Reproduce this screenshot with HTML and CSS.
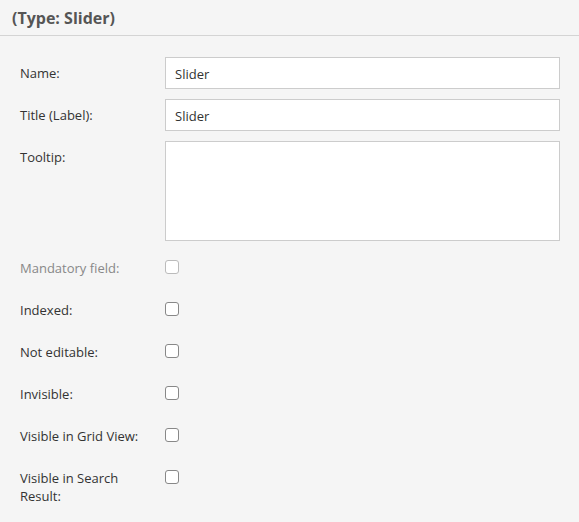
FILE: index.html
```html
<!DOCTYPE html>
<html>
<head>
<meta charset="utf-8">
<link rel="stylesheet" href="styles.css">
</head>
<body>
<div class="panel">
  <div class="header">(Type: Slider)</div>
  <form class="form">
    <div class="row">
      <label class="label">Name:</label>
      <div class="field"><input class="input" type="text" value="Slider"></div>
    </div>
    <div class="row">
      <label class="label">Title (Label):</label>
      <div class="field"><input class="input" type="text" value="Slider"></div>
    </div>
    <div class="row">
      <label class="label">Tooltip:</label>
      <div class="field"><textarea class="textarea"></textarea></div>
    </div>
    <div class="row row-check disabled">
      <label class="label">Mandatory field:</label>
      <div class="field"><span class="check"></span></div>
    </div>
    <div class="row row-check">
      <label class="label">Indexed:</label>
      <div class="field"><span class="check"></span></div>
    </div>
    <div class="row row-check">
      <label class="label">Not editable:</label>
      <div class="field"><span class="check"></span></div>
    </div>
    <div class="row row-check">
      <label class="label">Invisible:</label>
      <div class="field"><span class="check"></span></div>
    </div>
    <div class="row row-check">
      <label class="label">Visible in Grid View:</label>
      <div class="field"><span class="check"></span></div>
    </div>
    <div class="row row-check">
      <label class="label">Visible in Search Result:</label>
      <div class="field"><span class="check"></span></div>
    </div>
  </form>
</div>
</body>
</html>
```
FILE: styles.css
```css
html, body {
  margin: 0;
  padding: 0;
  background: #f5f5f5;
}
body {
  font-family: "Open Sans", "Liberation Sans", sans-serif;
  font-size: 13px;
  color: #333;
}
.panel {
  width: 579px;
  height: 522px;
  overflow: hidden;
}
.header {
  height: 36px;
  line-height: 36px;
  padding-left: 12px;
  font-size: 16px;
  font-weight: 700;
  color: #555;
  border-bottom: 1px solid #d4d4d4;
  box-sizing: border-box;
}
.form {
  display: flex;
  flex-direction: column;
  gap: 10px;
  padding: 21px 19px 0 20px;
}
.row {
  display: flex;
  align-items: flex-start;
}
.label {
  width: 145px;
  flex: none;
  padding-top: 7px;
  line-height: 18px;
  padding-right: 10px;
  box-sizing: border-box;
}
.field {
  flex: 1;
}
.input, .textarea {
  display: block;
  width: 100%;
  box-sizing: border-box;
  border: 1px solid #ccc;
  background: #fff;
  font-family: "Open Sans", "Liberation Sans", sans-serif;
  font-size: 13px;
  color: #333;
  padding: 1px 9px 0;
  margin: 0;
  outline: none;
  border-radius: 0;
}
.input {
  height: 32px;
}
.textarea {
  height: 100px;
  resize: none;
}
.row-check {
  min-height: 32px;
}
.row-check.disabled {
  margin-top: 1px;
}
.check {
  display: block;
  width: 14px;
  height: 14px;
  box-sizing: border-box;
  border: 1px solid #888;
  border-radius: 3px;
  background: #fff;
  margin-top: 8px;
}
.disabled .label {
  color: #888;
}
.disabled .check {
  border-color: #bbb;
}
```
